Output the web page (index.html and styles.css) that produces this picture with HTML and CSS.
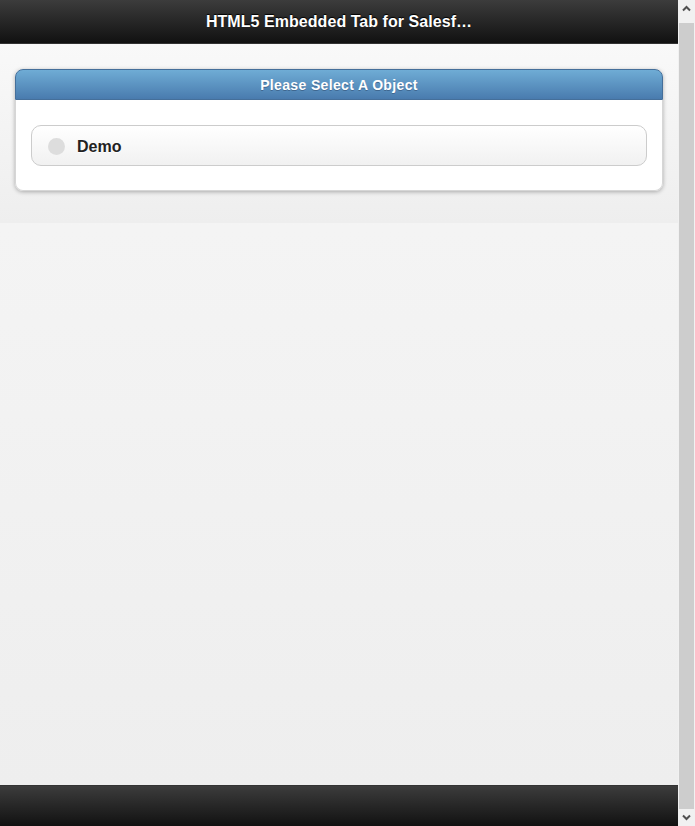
FILE: index.html
```html
<!DOCTYPE html>
<html>
<head>
<meta charset="utf-8">
<title>HTML5 Embedded Tab for Salesforce</title>
<link rel="stylesheet" href="styles.css">
</head>
<body>
<div class="window">
  <div class="app">
    <header class="bar header">
      <h1 class="title">HTML5 Embedded Tab for Salesf…</h1>
    </header>
    <main class="page">
      <div class="content">
        <section class="card">
          <div class="card-head">Please Select A Object</div>
          <div class="card-body">
            <label class="radio-btn">
              <span class="radio-icon"></span>
              <span class="radio-text">Demo</span>
            </label>
          </div>
        </section>
      </div>
      <div class="filler"></div>
    </main>
    <footer class="bar footer"></footer>
  </div>
  <div class="scrollbar">
    <div class="sb-btn">
      <svg width="9" height="7" viewBox="0 0 9 7"><polyline points="1,5.5 4.5,2 8,5.5" fill="none" stroke="#505050" stroke-width="2"/></svg>
    </div>
    <div class="sb-track"><div class="sb-thumb"></div></div>
    <div class="sb-btn">
      <svg width="9" height="7" viewBox="0 0 9 7"><polyline points="1,1.5 4.5,5 8,1.5" fill="none" stroke="#505050" stroke-width="2"/></svg>
    </div>
  </div>
</div>
</body>
</html>
```
FILE: styles.css
```css
html, body {
  margin: 0;
  padding: 0;
  height: 826px;
  overflow: hidden;
}
body {
  font-family: "Liberation Sans", Arial, sans-serif;
}
.window {
  display: flex;
  height: 826px;
}
.app {
  width: 678px;
  display: flex;
  flex-direction: column;
}
.bar {
  background: linear-gradient(#3c3c3c, #111111);
  color: #fff;
}
.header {
  height: 43px;
  border-bottom: 1px solid #333;
  display: flex;
  align-items: center;
  justify-content: center;
}
.title {
  margin: 0;
  font-size: 16px;
  font-weight: bold;
  text-align: center;
  white-space: nowrap;
  text-shadow: 0 -1px 1px #000;
  line-height: 20px;
  padding-top: 1px;
  letter-spacing: 0.05px;
}
.page {
  flex: 1;
  display: flex;
  flex-direction: column;
  background: linear-gradient(#f6f6f6, #eeeeee);
}
.content {
  padding: 25px 15px 32px;
  background: linear-gradient(#f9f9f9, #eeeeee);
}
.filler {
  flex: 1;
}
.card {
  border-radius: 8px;
  background: #fff;
  box-shadow: 0 1px 4px rgba(0, 0, 0, 0.3);
}
.card-head {
  height: 29px;
  border: 1px solid #456f9a;
  border-radius: 8px 8px 0 0;
  background: linear-gradient(#6facd5, #497bae);
  color: #fff;
  font-size: 14px;
  font-weight: bold;
  text-align: center;
  line-height: 31px;
  letter-spacing: 0.35px;
  text-shadow: 0 1px 0 #3e6790;
}
.card-body {
  padding: 25px 15px 24px;
  border: 1px solid #d6d6d6;
  border-top: 0;
  border-radius: 0 0 8px 8px;
}
.radio-btn {
  display: flex;
  align-items: center;
  gap: 12px;
  height: 39px;
  padding-left: 16px;
  border: 1px solid #cccccc;
  border-radius: 10px;
  background: linear-gradient(#ffffff, #f1f1f1);
  cursor: pointer;
}
.radio-icon {
  width: 17px;
  height: 17px;
  border-radius: 50%;
  background: #dddddd;
  flex: none;
  margin-top: 2px;
}
.radio-text {
  font-size: 16px;
  font-weight: bold;
  color: #222;
  text-shadow: 0 1px 0 #fff;
  padding-top: 3px;
}
.footer {
  height: 40px;
  border-top: 1px solid #333;
}
.scrollbar {
  width: 17px;
  background: #f1f1f1;
  display: flex;
  flex-direction: column;
}
.sb-btn {
  height: 17px;
  display: flex;
  align-items: center;
  justify-content: center;
}
.sb-track {
  flex: 1;
  padding: 6px 1px 0;
  display: flex;
}
.sb-thumb {
  flex: 1;
  background: #cdcdcd;
}
```
